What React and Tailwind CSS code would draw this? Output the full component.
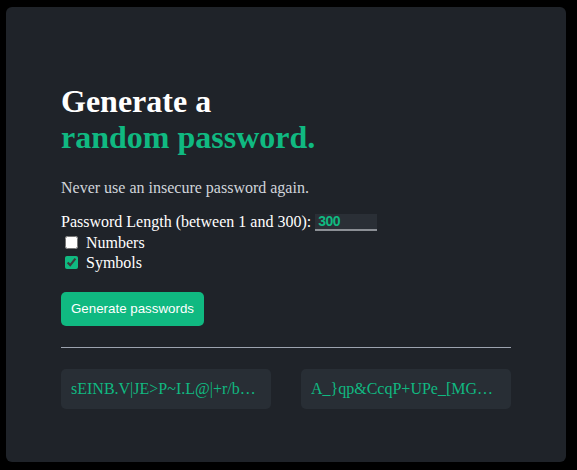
import React from "react";

export default function App() {
  const serif = { fontFamily: '"Liberation Serif", "Times New Roman", serif' };
  return (
    <div className="w-[577px] h-[470px] bg-black pt-[7px] pl-[6px] overflow-hidden">
      <div
        className="w-[560px] h-[455px] bg-[#1f2329] rounded-[6px] px-[55px] pt-[55px] text-white"
        style={serif}
      >
        <h1 className="mt-[21.44px] mb-[23.5px] text-[32px] leading-[36px] font-bold">
          <span className="text-white">Generate a</span>
          <br />
          <span className="text-[#10b981]">random password.</span>
        </h1>
        <p className="text-[16px] leading-[18px] text-[#d1d5db] mb-[15px]">
          Never use an insecure password again.
        </p>
        <div className="flex items-center h-[21px] text-[16px] leading-[18px]">
          <span>Password Length (between 1 and 300):</span>
          <input
            type="text"
            defaultValue="300"
            className="ml-[4px] w-[62px] h-[17px] bg-[#2a2f36] border-b-2 border-[#8b8f95] pl-[3px] text-[#10b981] text-[14px] leading-[15px] tracking-[-0.5px] font-semibold outline-none"
            style={{ fontFamily: '"Liberation Sans", Arial, sans-serif' }}
          />
        </div>
        <label className="flex items-center h-[20px] text-[16px] leading-[18px]">
          <input
            type="checkbox"
            className="ml-[4px] mr-[8px] w-[13px] h-[13px] accent-[#10b981]"
          />
          <span>Numbers</span>
        </label>
        <label className="flex items-center h-[20px] text-[16px] leading-[18px]">
          <input
            type="checkbox"
            defaultChecked
            className="ml-[4px] mr-[8px] w-[13px] h-[13px] accent-[#10b981]"
          />
          <span>Symbols</span>
        </label>
        <button
          className="mt-[19.5px] h-[34px] w-[143px] rounded-[5px] bg-[#10b981] text-white text-[13.33px]"
          style={{ fontFamily: '"Liberation Sans", Arial, sans-serif' }}
        >
          Generate passwords
        </button>
        <hr className="mt-[20.5px] border-t border-[#9ca3af]" />
        <div className="mt-[21px] grid grid-cols-2 gap-[30px]">
          <div className="h-[40px] rounded-[5px] bg-[#282e35] px-[10px] flex items-center text-[#10b981] text-[16px] leading-[18px] min-w-0">
            <span className="truncate block w-full">
              sEINB.V|JE&gt;P~I.L@|+r/bQw#9tZ$kd^Lm!xR2
            </span>
          </div>
          <div className="h-[40px] rounded-[5px] bg-[#282e35] px-[10px] flex items-center text-[#10b981] text-[16px] leading-[18px] min-w-0">
            <span className="truncate block w-full">
              A_&#125;qp&amp;CcqP+UPe_[MGh7$Lw!vN3eRt
            </span>
          </div>
        </div>
      </div>
    </div>
  );
}
